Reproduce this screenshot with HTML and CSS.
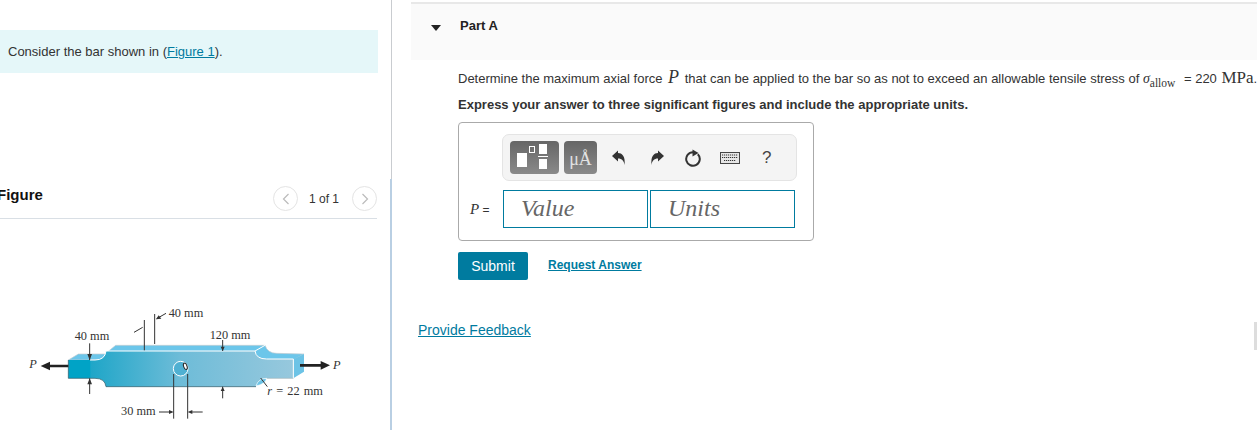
FILE: index.html
```html
<!DOCTYPE html>
<html lang="en">
<head>
  <meta charset="UTF-8" />
  <title>Part A</title>
  <link rel="stylesheet" href="styles.css">
</head>
<body>

  <div class="left">
    <div class="intro">Consider the bar shown in (<a href="#">Figure 1</a>).</div>

    <div class="figure-head">
      <h2>Figure</h2>
      <div class="pager">
        <span class="circle">
          <svg width="8" height="12" viewBox="0 0 8 12"><path d="M6.500 1 L1.500 6 L6.500 11" /></svg>
        </span>
        <span class="count">1 of 1</span>
        <span class="circle">
          <svg width="8" height="12" viewBox="0 0 8 12"><path d="M1.500 1 L6.500 6 L1.500 11" /></svg>
        </span>
      </div>
    </div>

    <svg class="bar" viewBox="0 0 1170 420" width="390" height="140">
      <defs>
        <linearGradient id="front" x1="0" x2="1" y1="0" y2="0">
          <stop offset="0" stop-color="#00a3c6" />
          <stop offset="0.095" stop-color="#00a3c6" />
          <stop offset="0.1" stop-color="#1fa6c8" />
          <stop offset="0.5" stop-color="#6ebcd8" />
          <stop offset="1" stop-color="#97c8dd" />
        </linearGradient>
      </defs>
      <!-- top face, right face, front face -->
      <path fill="#6cc6ea" stroke="#c4ccd0" stroke-width="2" d="M205 210 L235 192 L315 192 L347 166 L795 166 Q803 190 830 190 L912 192 L880 210 L205 210 Z" />
      <path fill="#6cc3e6" d="M880 208 L912 192 L912 245 L880 265 Z" />
      <path fill="url(#front)" d="M205 210 L285 210 Q315 210 318 183 L765 183 Q768 207 800 207 L880 207 L880 265 L800 265 Q775 265 768 290 L318 290 Q315 265 285 265 L205 265 Z" />
      <path fill="none" stroke="#fff" stroke-width="3" d="M270 210 L285 210 Q315 210 318 183 L765 183 L795 166 M765 183 Q768 207 800 207 L880 207 L880 265" />
      <path fill="none" stroke="#2f5560" stroke-width="2" d="M205 210 L205 265 L285 265 Q315 265 318 290 L768 290" />
      <path fill="none" stroke="#a5b4ba" stroke-width="2" d="M800 265 L880 265" />
      <path fill="#6cc3e6" stroke="#fff" stroke-width="2" d="M768 288 Q775 265 800 265 Q797 282 768 288 Z" />
      <circle cx="542" cy="236" r="22" fill="#4fb0d2" stroke="#fff" stroke-width="3" />
      <ellipse cx="556" cy="229" rx="5" ry="10" fill="#fff" stroke="#222" stroke-width="3" transform="rotate(-20 556 229)" />

      <g fill="none" stroke="#333" stroke-width="3">
        <path d="M269 160 L269 210 M269 265 L269 312" />
        <path d="M433 90 L433 181 M464 72 L464 162" />
        <path d="M402 127 L428 112 M470 86 L498 70" />
        <path d="M668 150 L668 183 M668 290 L668 325" />
        <path d="M521 252 L521 386 M563 252 L563 386" />
        <path d="M477 366 L515 366 M572 366 L608 366" />
        <path d="M782 264 L802 290" />
      </g>
      <g fill="#333">
        <path d="M262 192 L276 192 L269 210 Z M262 283 L276 283 L269 265 Z" />
        <path d="M662 170 L674 170 L668 183 Z M662 303 L674 303 L668 290 Z" />
        <path d="M468 88 L484 86 L476 76 Z" />
        <path d="M521 366 L507 360 L507 372 Z M563 366 L577 360 L577 372 Z" />
      </g>
      <g fill="#222">
        <path d="M122 228 L150 215 L150 224 L205 224 L205 232 L150 232 L150 241 Z" />
        <path d="M990 226 L962 213 L962 222 L900 222 L900 230 L962 230 L962 239 Z" />
      </g>

      <g class="dim">
        <text x="224" y="149">40 mm</text>
        <text x="506" y="80">40 mm</text>
        <text x="629" y="147">120 mm</text>
        <text x="363" y="375">30 mm</text>
        <text x="802" y="314" word-spacing="3"><tspan font-style="italic">r</tspan> = 22 mm</text>
        <text x="88" y="235" font-style="italic">P</text>
        <text x="999" y="236" font-style="italic">P</text>
      </g>
    </svg>
  </div>

  <div class="right">
    <div class="part-head">
      <span class="caret"></span>
      <span class="part-title">Part A</span>
    </div>

    <div class="part-body">
      <p class="question">Determine the maximum axial force <i class="var">P</i> that can be applied to the bar so as not to exceed an allowable tensile stress of <i class="sigma">σ</i><sub>allow</sub> = 220 <span class="math">MPa</span>.</p>
      <p class="express">Express your answer to three significant figures and include the appropriate units.</p>

      <div class="answer">
        <div class="toolbar">
          <span class="tool tool-frac">
            <svg width="49" height="33" viewBox="0 0 49 33">
              <rect x="7" y="12" width="10" height="14" fill="#fff" />
              <rect x="19.500" y="5.500" width="5" height="6" fill="none" stroke="#fff" />
              <rect x="29" y="3" width="8" height="10" fill="#fff" />
              <rect x="28" y="15" width="10" height="1" fill="#fff" />
              <rect x="29" y="18" width="8" height="10" fill="#fff" />
            </svg>
          </span>
          <span class="tool tool-unit">μÅ</span>
          <svg class="icon icon-undo" width="16" height="16" viewBox="0 0 16 16"><path d="M1 6 L7 0.500 L7 3 C11 3 14.500 6 13.500 15 C13 11 11 8.500 7 8.500 L7 11.500 Z" /></svg>
          <svg class="icon icon-redo" width="16" height="16" viewBox="0 0 16 16"><path d="M15 6 L9 0.500 L9 3 C5 3 1.500 6 2.500 15 C3 11 5 8.500 9 8.500 L9 11.500 Z" /></svg>
          <svg class="icon icon-reset" width="18" height="18" viewBox="0 0 18 18"><path class="ring" d="M9 3.200 A6.800 6.800 0 1 0 13.800 5.200" /><path d="M8.500 0.500 L14.500 4 L8.500 7.500 Z" /></svg>
          <svg class="icon icon-keys" width="20" height="12" viewBox="0 0 20 12">
            <rect x="0.500" y="0.500" width="19" height="11" fill="#e6e6e6" stroke="#444" />
            <path class="keys" d="M2 3 H18 M2 5.500 H18 M4 8.500 H16" stroke-dasharray="1.200 0.800" />
          </svg>
          <span class="help">?</span>
        </div>

        <div class="input-row">
          <span class="label"><i>P</i> =</span>
          <div class="field">Value</div>
          <div class="field">Units</div>
        </div>
      </div>

      <div class="actions">
        <button class="submit">Submit</button>
        <a class="request" href="#">Request Answer</a>
      </div>
    </div>

    <a class="feedback" href="#">Provide Feedback</a>
  </div>

  <div class="scroll-nub"></div>

</body>
</html>
```

FILE: styles.css
```css
body {
  font-family: 'Liberation Sans', Arial, sans-serif;
  color: #333;
  margin: 0;
  height: 430px;
  display: flex;
  overflow: hidden;
  background: #fff;
  font-size: 13px;
}

a {
  color: #007b9f;
}

.left {
  width: 392px;
  flex-shrink: 0;
  height: 430px;
  overflow: hidden;
  padding-top: 30px;
  box-sizing: border-box;
  background:
    linear-gradient(#c9ccd0, #c9ccd0) 391px 0 / 1px 179px no-repeat,
    linear-gradient(#b9cfe3, #b9cfe3) 390px 179px / 2px 251px no-repeat;
}

.intro {
  width: 370px;
  height: 43px;
  line-height: 43px;
  padding-left: 8px;
  background: #e5f7f9;
}

.figure-head {
  width: 377px;
  height: 146px;
  border-bottom: 1px solid #d9dfe5;
  display: flex;
  align-items: flex-end;
  justify-content: space-between;
  box-sizing: border-box;
  padding-bottom: 7px;
}

h2 {
  margin: 0 0 7px -3px;
  font-size: 15px;
  line-height: 18px;
  color: #111;
}

.pager {
  display: flex;
  align-items: center;
  color: #333;
  font-size: 12px;
}

.circle {
  width: 25px;
  height: 25px;
  border: 1px solid #e4e4e4;
  border-radius: 50%;
  box-sizing: border-box;
  display: flex;
  align-items: center;
  justify-content: center;
}

.circle path {
  fill: none;
  stroke: #bbb;
  stroke-width: 1.200;
}

.count {
  width: 54px;
  padding-right: 2px;
  box-sizing: border-box;
  text-align: center;
}

.bar {
  display: block;
  margin-top: 71px;
}

.dim text {
  font-family: 'Liberation Serif', serif;
  font-size: 37px;
  fill: #333;
}

.right {
  flex: 1;
  min-width: 0;
  padding-left: 19px;
  padding-top: 2px;
  overflow: hidden;
}

.part-head {
  height: 58px;
  background: #fafafa;
  border-top: 2px solid #e8e8e8;
  box-sizing: border-box;
  display: flex;
  padding: 14px 0 0 20px;
  line-height: 16px;
}

.caret {
  width: 0;
  height: 0;
  margin-top: 7px;
  border-left: 5.500px solid transparent;
  border-right: 5.500px solid transparent;
  border-top: 6px solid #222;
}

.part-title {
  margin-left: 19px;
  font-weight: bold;
  color: #222;
}

.part-body {
  padding-left: 47px;
}

.question {
  margin: 9px 0 0;
  height: 20px;
  line-height: 20px;
  white-space: nowrap;
}

.var {
  font-family: 'Liberation Serif', serif;
  font-size: 18px;
  line-height: 0;
  margin: 0 2px;
}

.sigma {
  font-family: 'Liberation Serif', serif;
  font-size: 14px;
  line-height: 0;
}

sub {
  font-family: 'Liberation Serif', serif;
  font-size: 11.500px;
  line-height: 0;
  margin-right: 5px;
}

.math {
  font-family: 'Liberation Serif', serif;
  font-size: 17px;
  line-height: 0;
  margin-left: 1px;
}

.express {
  margin: 6px 0 0;
  font-weight: bold;
  line-height: 20px;
  white-space: nowrap;
}

.answer {
  width: 356px;
  height: 119px;
  margin-top: 7px;
  border: 1px solid #aaa;
  border-radius: 4px;
  box-sizing: border-box;
  padding: 11px 16px 0 11px;
}

.toolbar {
  width: 295px;
  height: 47px;
  margin-left: 32px;
  background: #f4f4f4;
  border: 1px solid #e4e4e4;
  border-radius: 7px;
  box-sizing: border-box;
  display: flex;
  align-items: center;
  padding-left: 7px;
}

.tool {
  height: 33px;
  border-radius: 4px;
  background: linear-gradient(#666, #8a8a8a);
  display: block;
}

.tool-frac {
  width: 49px;
}

.tool-frac svg {
  display: block;
}

.tool-unit {
  width: 33px;
  margin-left: 5px;
  color: #e2e2e2;
  font-family: 'Liberation Serif', serif;
  font-size: 18px;
  line-height: 36px;
  text-align: center;
}

.icon {
  display: block;
  fill: #333;
}

.icon-undo {
  margin-left: 14px;
}

.icon-redo {
  margin-left: 22px;
}

.icon-reset {
  margin-left: 19px;
}

.icon-reset .ring {
  fill: none;
  stroke: #333;
  stroke-width: 2;
}

.icon-keys {
  margin-left: 18px;
}

.icon-keys .keys {
  fill: none;
  stroke: #333;
  stroke-width: 1.200;
}

.help {
  margin-left: 22px;
  font-size: 17px;
  color: #444;
}

.input-row {
  display: flex;
  align-items: center;
  gap: 2px;
  margin-top: 9px;
}

.label {
  width: 31px;
  font-size: 12px;
  color: #333;
}

.label i {
  font-family: 'Liberation Serif', serif;
  font-size: 15px;
}

.field {
  width: 145px;
  height: 38px;
  border: 1px solid #007b9f;
  box-sizing: border-box;
  padding-left: 17px;
  font-family: 'Liberation Serif', serif;
  font-style: italic;
  font-size: 24px;
  line-height: 35px;
  color: #666;
}

.actions {
  display: flex;
  align-items: center;
  margin-top: 11px;
}

.submit {
  width: 70px;
  height: 28px;
  border: none;
  border-radius: 2px;
  background: #007b9f;
  color: #fff;
  font-family: inherit;
  font-size: 14px;
  padding: 0;
}

.request {
  margin: -2px 0 0 20px;
  font-size: 12px;
  font-weight: bold;
}

.feedback {
  display: block;
  width: fit-content;
  margin: 42px 0 0 7px;
  font-size: 14px;
}

.scroll-nub {
  position: absolute;
  top: 322px;
  right: 0;
  width: 3px;
  height: 28px;
  background: #ddd;
}
```
